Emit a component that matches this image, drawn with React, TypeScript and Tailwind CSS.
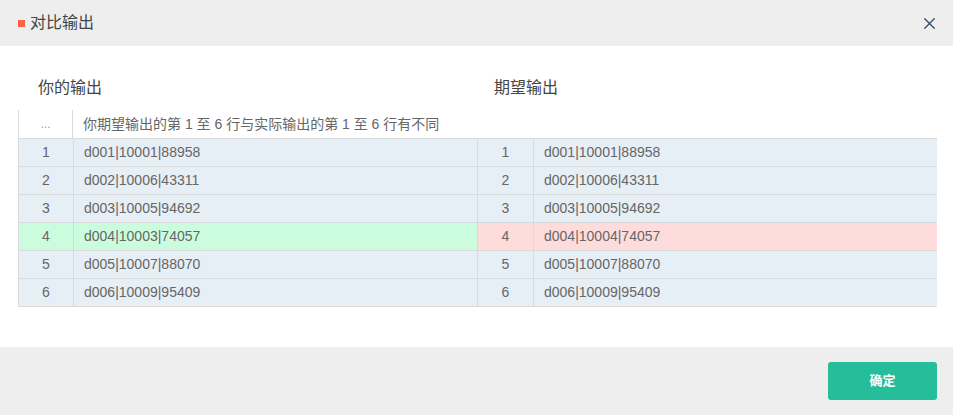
import { X } from 'lucide-react';

type Row = { no: number; left: string; right: string; diff?: boolean };

const rows: Row[] = [
  { no: 1, left: 'd001|10001|88958', right: 'd001|10001|88958' },
  { no: 2, left: 'd002|10006|43311', right: 'd002|10006|43311' },
  { no: 3, left: 'd003|10005|94692', right: 'd003|10005|94692' },
  { no: 4, left: 'd004|10003|74057', right: 'd004|10004|74057', diff: true },
  { no: 5, left: 'd005|10007|88070', right: 'd005|10007|88070' },
  { no: 6, left: 'd006|10009|95409', right: 'd006|10009|95409' },
];

function DiffRow({ row }: { row: Row }) {
  const leftBg = row.diff ? 'bg-[#ccfcde]' : 'bg-[#e6eef6]';
  const rightBg = row.diff ? 'bg-[#ffdcdc]' : 'bg-[#e6eef6]';
  return (
    <div className="grid h-[28px] grid-cols-[55px_404px_56px_1fr] border-t border-[#dadada] text-[14px] text-[#666]">
      <div className={`flex items-center justify-center border-l border-[#dadada] ${leftBg}`}>{row.no}</div>
      <div className={`flex items-center border-l border-[#dadada] pl-[10px] ${leftBg}`}>{row.left}</div>
      <div className={`flex items-center justify-center border-l border-[#dadada] ${rightBg}`}>{row.no}</div>
      <div className={`flex items-center border-l border-[#dadada] pl-[10px] ${rightBg}`}>{row.right}</div>
    </div>
  );
}

export default function App() {
  return (
    <div className="flex h-[415px] w-[953px] flex-col bg-white font-['Liberation_Sans','Noto_Sans_CJK_SC',sans-serif]">
      {/* Header */}
      <div className="flex h-[46px] shrink-0 items-center justify-between bg-[#eeeeee] pl-[18px] pr-[14px]">
        <div className="flex items-center gap-[5px]">
          <span className="h-[7px] w-[7px] bg-[#ff6347]" />
          <span className="text-[16px] text-[#444]">对比输出</span>
        </div>
        <X size={19} strokeWidth={1.6} className="text-[#34495e]" />
      </div>

      {/* Body */}
      <div className="flex-1 pl-[18px] pr-[16px] pt-[30px]">
        <div className="grid h-[34px] grid-cols-[459px_1fr] text-[16px] text-[#444]">
          <div className="flex items-start pl-[20px]">你的输出</div>
          <div className="flex items-start pl-[17px]">期望输出</div>
        </div>

        <div className="border-b border-[#dadada]">
          <div className="grid h-[28px] grid-cols-[55px_1fr] text-[14px] text-[#666]">
            <div className="flex items-center justify-center border-x border-[#dadada] text-[12px] text-[#999]">...</div>
            <div className="flex items-center pl-[10px]">你期望输出的第 1 至 6 行与实际输出的第 1 至 6 行有不同</div>
          </div>
          {rows.map((r) => (
            <DiffRow key={r.no} row={r} />
          ))}
        </div>
      </div>

      {/* Footer */}
      <div className="flex h-[68px] shrink-0 items-start justify-end bg-[#eeeeee] pr-[16px] pt-[15px]">
        <button className="h-[38px] w-[109px] rounded-[3px] bg-[#26bd9b] text-[13px] font-bold text-white">
          确定
        </button>
      </div>
    </div>
  );
}
